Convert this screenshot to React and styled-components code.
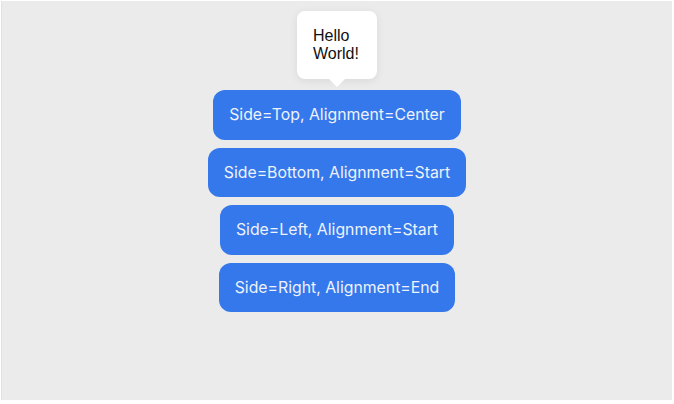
import React from "react";
import styled, { createGlobalStyle } from "styled-components";

const Global = createGlobalStyle`
  html, body { margin: 0; padding: 0; background: #ffffff; }
  body { width: 674px; height: 404px; overflow: hidden; }
`;

const Frame = styled.div`
  box-sizing: border-box;
  margin: 1px 2px 0 1px;
  width: 671px;
  height: 399px;
  background: #ebebeb;
  border-left: 1px solid #e2e2e2;
  display: flex;
  flex-direction: column;
  align-items: center;
  padding-top: 89px;
  gap: 8px;
`;

const Anchor = styled.div`
  position: relative;
  display: flex;
  justify-content: center;
`;

const Button = styled.button`
  box-sizing: border-box;
  height: 49.5px;
  padding: 0 16px;
  border: none;
  border-radius: 12px;
  background: #3478eb;
  color: #eef2fb;
  font-family: Inter, "Noto Sans", sans-serif;
  font-size: 15.8px;
  font-weight: 400;
  letter-spacing: 0;
  cursor: pointer;
`;

const Tooltip = styled.div`
  position: absolute;
  bottom: calc(100% + 11px);
  left: 50%;
  transform: translateX(-50%);
  box-sizing: border-box;
  width: 80px;
  padding: 16px;
  background: #ffffff;
  border-radius: 8px;
  box-shadow: 0 2px 8px rgba(0, 0, 0, 0.08);
  color: #111111;
  font-family: "Liberation Sans", Arial, sans-serif;
  font-size: 16px;
  line-height: 18px;

  &::after {
    content: "";
    position: absolute;
    left: 50%;
    top: 100%;
    transform: translateX(-50%);
    border-left: 8px solid transparent;
    border-right: 8px solid transparent;
    border-top: 8px solid #ffffff;
  }
`;

const items = [
  "Side=Top, Alignment=Center",
  "Side=Bottom, Alignment=Start",
  "Side=Left, Alignment=Start",
  "Side=Right, Alignment=End",
];

export default function App() {
  return (
    <>
      <Global />
      <Frame>
        {items.map((label, i) => (
          <Anchor key={label}>
            {i === 0 && <Tooltip>Hello World!</Tooltip>}
            <Button>{label}</Button>
          </Anchor>
        ))}
      </Frame>
    </>
  );
}
